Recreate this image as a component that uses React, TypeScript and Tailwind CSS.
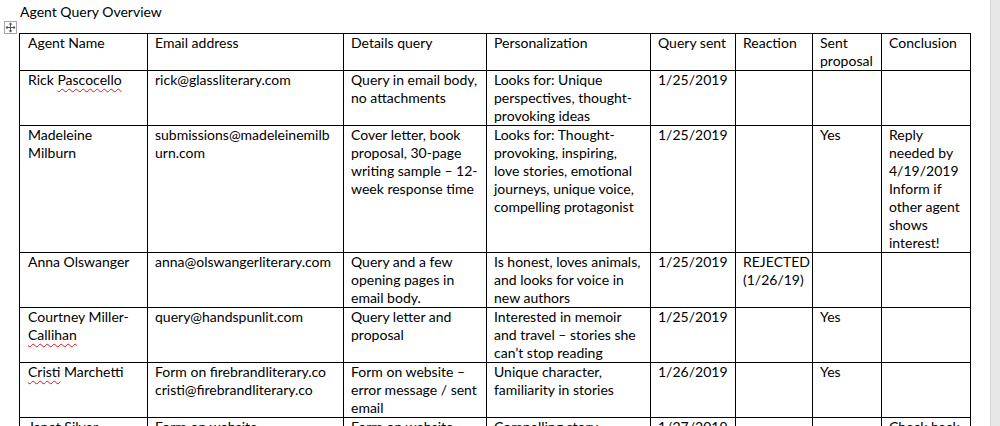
import React from "react";

type Cell = React.ReactNode[];

const S = ({ children }: { children: React.ReactNode }) => (
  <span className="underline decoration-wavy decoration-[#e81123] decoration-1 underline-offset-[3px]">
    {children}
  </span>
);

const widths = [128, 196, 143, 164, 85, 77, 69, 89];

const header: Cell[] = [
  ["Agent Name"],
  ["Email address"],
  ["Details query"],
  ["Personalization"],
  ["Query sent"],
  ["Reaction"],
  ["Sent", "proposal"],
  ["Conclusion"],
];

const rows: Cell[][] = [
  [
    [<>Rick <S>Pascocello</S></>],
    ["rick@glassliterary.com"],
    ["Query in email body,", "no attachments"],
    ["Looks for: Unique", "perspectives, thought-", "provoking ideas"],
    ["1/25/2019"],
    [],
    [],
    [],
  ],
  [
    ["Madeleine", "Milburn"],
    ["submissions@madeleinemilb", "urn.com"],
    ["Cover letter, book", "proposal, 30-page", "writing sample – 12-", "week response time"],
    [
      "Looks for: Thought-",
      "provoking, inspiring,",
      "love stories, emotional",
      "journeys, unique voice,",
      "compelling protagonist",
    ],
    ["1/25/2019"],
    [],
    ["Yes"],
    ["Reply", "needed by", "4/19/2019", "Inform if", "other agent", "shows", "interest!"],
  ],
  [
    ["Anna Olswanger"],
    ["anna@olswangerliterary.com"],
    ["Query and a few", "opening pages in", "email body."],
    ["Is honest, loves animals,", "and looks for voice in", "new authors"],
    ["1/25/2019"],
    ["REJECTED", "(1/26/19)"],
    [],
    [],
  ],
  [
    ["Courtney Miller-", <S>Callihan</S>],
    ["query@handspunlit.com"],
    ["Query letter and", "proposal"],
    ["Interested in memoir", "and travel – stories she", "can’t stop reading"],
    ["1/25/2019"],
    [],
    ["Yes"],
    [],
  ],
  [
    [<><S>Cristi</S> Marchetti</>],
    ["Form on firebrandliterary.co", "cristi@firebrandliterary.co"],
    ["Form on website –", "error message / sent", "email"],
    ["Unique character,", "familiarity in stories"],
    ["1/26/2019"],
    [],
    ["Yes"],
    [],
  ],
  [
    ["Janet Silver"],
    ["Form on website"],
    ["Form on website –", "sent"],
    ["Compelling story"],
    ["1/27/2019"],
    [],
    [],
    ["Check back", "later"],
  ],
];

function MoveHandle() {
  return (
    <svg width="13" height="13" viewBox="0 0 13 13" className="block">
      <rect x="0.5" y="0.5" width="12" height="12" fill="#fff" stroke="#a6a6a6" />
      <g stroke="#555" strokeWidth="1" fill="none" shapeRendering="crispEdges">
        <line x1="6.5" y1="2" x2="6.5" y2="11" />
        <line x1="2" y1="6.5" x2="11" y2="6.5" />
      </g>
      <g fill="#555">
        <path d="M6.5 1.5 L4.5 3.5 L8.5 3.5 Z" />
        <path d="M6.5 11.5 L4.5 9.5 L8.5 9.5 Z" />
        <path d="M1.5 6.5 L3.5 4.5 L3.5 8.5 Z" />
        <path d="M11.5 6.5 L9.5 4.5 L9.5 8.5 Z" />
      </g>
    </svg>
  );
}

function CellContent({ lines }: { lines: Cell }) {
  return (
    <>
      {lines.map((l, i) => (
        <div key={i} className="whitespace-nowrap">
          {l}
        </div>
      ))}
    </>
  );
}

export default function App() {
  return (
    <div
      className="flex h-[426px] w-[1000px] overflow-hidden bg-white text-black"
      style={{ fontFamily: "Lato, 'Liberation Sans', sans-serif" }}
    >
      <div className="relative flex-1 text-[14px] leading-[18px]">
        <div className="pl-[20px] pt-[3px] h-[33px]">Agent Query Overview</div>
        <div className="absolute left-[4px] top-[21px]">
          <MoveHandle />
        </div>
        <table className="ml-[19px] w-[951px] table-fixed border-collapse">
          <colgroup>
            {widths.map((w, i) => (
              <col key={i} style={{ width: w }} />
            ))}
          </colgroup>
          <thead>
            <tr>
              {header.map((c, i) => (
                <th
                  key={i}
                  className={`border border-black align-top text-left font-normal p-0 ${
                    i === 0 ? "pl-[8px]" : "pl-[7px]"
                  }`}
                >
                  <CellContent lines={c} />
                </th>
              ))}
            </tr>
          </thead>
          <tbody>
            {rows.map((r, ri) => (
              <tr key={ri}>
                {r.map((c, i) => (
                  <td
                    key={i}
                    className={`border border-black align-top p-0 ${
                      i === 0 ? "pl-[8px]" : "pl-[7px]"
                    } ${c.length === 0 ? "h-[18px]" : ""}`}
                  >
                    <CellContent lines={c} />
                  </td>
                ))}
              </tr>
            ))}
          </tbody>
        </table>
      </div>
      <div className="w-[10px] shrink-0 border-l border-[#d6d6d6] bg-[#e6e6e6]" />
    </div>
  );
}
